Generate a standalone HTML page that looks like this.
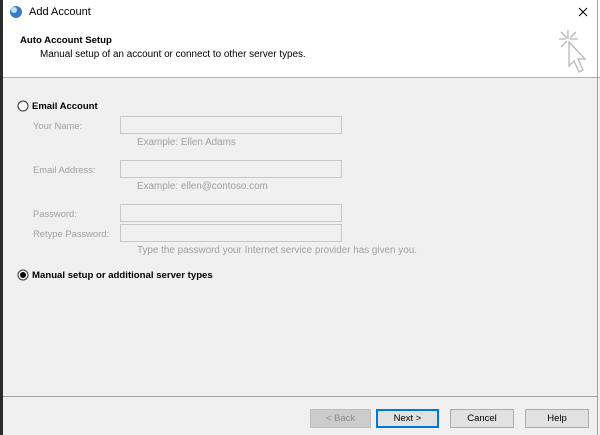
<!DOCTYPE html><html><head><style>
body{margin:0;width:600px;height:435px;background:#f0f0f0;font-family:"Liberation Sans",sans-serif;font-size:9px;position:relative;overflow:hidden}
.a{position:absolute}
.in{position:absolute;left:120px;width:220px;height:16px;border:1px solid #c8c8c8;background:#f0f0f0}
.lb{position:absolute;left:33px;color:#a0a0a0;font-size:9.4px}
.ex{position:absolute;left:137px;color:#a0a0a0;font-size:9.9px}
.btn{position:absolute;top:409px;height:17px;border:1px solid #adadad;background:#e1e1e1;text-align:center;line-height:17px;font-size:9.5px;color:#000}
</style></head><body>
<div class="a" style="left:0;top:0;width:600px;height:77px;background:#fff"></div>
<div class="a" style="left:0;top:77px;width:600px;height:1px;background:#b0b0b0"></div>
<div class="a" style="left:0;top:0;width:3px;height:435px;background:#2b2b2b"></div>
<div class="a" style="left:597px;top:0;width:1px;height:435px;background:#a0a0a0"></div>
<svg class="a" style="left:9px;top:5px" width="14" height="14"><circle cx="7" cy="7" r="6" fill="#3a7bc8"/><circle cx="5" cy="5" r="3" fill="#bfe0f5"/></svg>
<div class="a" style="left:29px;top:6px;font-size:11px">Add Account</div>
<svg class="a" style="left:578px;top:7px" width="10" height="10" stroke="#000" stroke-width="1"><path d="M1 1l8 8M9 1l-8 8"/></svg>
<div class="a" style="left:20px;top:35px;font-weight:bold;font-size:9.6px">Auto Account Setup</div>
<div class="a" style="left:40px;top:49px;font-size:9.9px">Manual setup of an account or connect to other server types.</div>
<svg class="a" style="left:555px;top:28px" width="35" height="48" fill="none" stroke="#b8b8b8" stroke-width="1.3"><path d="M13 2v9M4 11h7M15 11h8M6 4l6 6M21 4l-6 6M6 19l6-6"/><path d="M14 14l0 24 5-5 5 11 4-2-5-11 7 0z" fill="#fff"/></svg>
<svg class="a" style="left:17px;top:100px" width="12" height="12"><circle cx="6" cy="6" r="5" fill="#fff" stroke="#333"/></svg>
<div class="a" style="left:32px;top:101px;font-weight:bold;font-size:9.5px">Email Account</div>
<div class="lb" style="top:120px">Your Name:</div><div class="in" style="top:116px"></div>
<div class="ex" style="top:137px">Example: Ellen Adams</div>
<div class="lb" style="top:164px">Email Address:</div><div class="in" style="top:160px"></div>
<div class="ex" style="top:181px">Example: ellen@contoso.com</div>
<div class="lb" style="top:208px">Password:</div><div class="in" style="top:204px"></div>
<div class="lb" style="top:228px">Retype Password:</div><div class="in" style="top:224px"></div>
<div class="ex" style="top:245px">Type the password your Internet service provider has given you.</div>
<svg class="a" style="left:17px;top:269px" width="12" height="12"><circle cx="6" cy="6" r="5" fill="#fff" stroke="#333"/><circle cx="6" cy="6" r="3" fill="#000"/></svg>
<div class="a" style="left:32px;top:270px;font-weight:bold;font-size:9.6px">Manual setup or additional server types</div>
<div class="a" style="left:3px;top:396px;width:594px;height:1px;background:#a0a0a0"></div>
<div class="btn" style="left:310px;width:59px;background:#ccc;border-color:#bfbfbf;color:#8a8a8a">&lt; Back</div>
<div class="btn" style="left:376px;width:61px;border:1px solid #0078d7;box-shadow:inset 0 0 0 1px #0078d7">Next &gt;</div>
<div class="btn" style="left:450px;width:62px">Cancel</div>
<div class="btn" style="left:525px;width:62px">Help</div>
</body></html>
